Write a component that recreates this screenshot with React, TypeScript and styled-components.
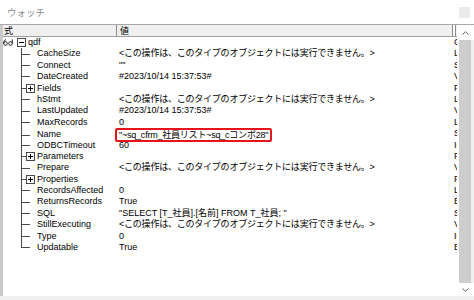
import React from 'react';
import styled, { createGlobalStyle } from 'styled-components';

const GlobalStyle = createGlobalStyle`
  html, body {
    margin: 0;
    padding: 0;
    background: #fff;
  }
  body {
    font-family: "Liberation Sans", "Noto Sans CJK JP", sans-serif;
    color: #000;
  }
`;

const ROW_H = 11.4;

const Window = styled.div`
  width: 474px;
  height: 300px;
  display: flex;
  flex-direction: column;
  background: #fff;
  overflow: hidden;
`;

const TitleBar = styled.div`
  height: 24px;
  flex: none;
  box-sizing: border-box;
  display: flex;
  align-items: flex-start;
  justify-content: space-between;
  padding: 7px 4px 0 7px;
`;

const Title = styled.span`
  font-family: "Noto Sans CJK JP", sans-serif;
  font-size: 9.5px;
  line-height: 11px;
  color: #8c8c8c;
`;

const CornerButton = styled.span`
  width: 11px;
  height: 11px;
  background: #ebebeb;
`;

const Body = styled.div`
  flex: 1;
  display: flex;
  min-height: 0;
  border-top: 1px solid #a8a8a8;
`;

const ListPane = styled.div`
  width: 457px;
  box-sizing: border-box;
  border-left: 3px solid #c9c9c9;
  display: flex;
  flex-direction: column;
  overflow: hidden;
`;

const HeaderRow = styled.div`
  height: 11px;
  flex: none;
  display: grid;
  grid-template-columns: 114px 336px 1fr;
  background: #f0f0f0;
  border-bottom: 1px solid #a0a0a0;
  font-family: "Noto Sans CJK JP", sans-serif;
  font-size: 9px;
  line-height: 11px;
`;

const HeaderCell = styled.div<{ $pad?: number; $tail?: boolean }>`
  box-sizing: border-box;
  height: 11px;
  padding-left: ${(p) => p.$pad ?? 0}px;
  border-right: ${(p) => (p.$tail ? 'none' : '1px solid #8a8a8a')};
  background: ${(p) =>
    p.$tail ? 'linear-gradient(to right, #fff 0 2px, #8a8a8a 2px 3px, #f0f0f0 3px)' : 'transparent'};
`;

const Row = styled.div`
  height: ${ROW_H}px;
  flex: none;
  display: grid;
  grid-template-columns: 114px 336px 1fr;
  font-size: 9px;
  line-height: ${ROW_H}px;
  white-space: nowrap;
`;

const TreeCell = styled.div<{ $indent: number }>`
  display: flex;
  align-items: center;
  padding-left: ${(p) => p.$indent}px;
`;

const Branch = styled.span<{ $len: number; $last?: boolean }>`
  width: ${(p) => p.$len}px;
  align-self: stretch;
  flex: none;
  background:
    linear-gradient(#4a4a4a, #4a4a4a) left top / 1px ${(p) => (p.$last ? '50%' : '100%')} no-repeat,
    linear-gradient(#4a4a4a, #4a4a4a) left center / 100% 1px no-repeat;
`;

const Label = styled.span<{ $gap: number }>`
  margin-left: ${(p) => p.$gap}px;
`;

const ValueCell = styled.div<{ $tight?: boolean }>`
  display: flex;
  align-items: center;
  padding-left: 2px;
  letter-spacing: ${(p) => (p.$tight ? '-0.22px' : 'normal')};
`;

const Highlight = styled.span`
  margin-left: -4px;
  padding: 0 2px;
  border: 2px solid #e8141c;
  border-radius: 2px;
  line-height: 10px;
  background: #fff;
`;

const TypeCell = styled.div`
  padding-left: 1px;
  overflow: hidden;
`;

const Scrollbar = styled.div`
  width: 15px;
  margin-left: 2px;
  display: flex;
  flex-direction: column;
  background: #f0f0f0;
`;

const ArrowBox = styled.div<{ $h: number }>`
  height: ${(p) => p.$h}px;
  flex: none;
  display: flex;
  align-items: center;
  justify-content: center;
  padding-right: 3px;
  background: #fff;
`;

const Thumb = styled.div`
  flex: 1;
  margin-right: 3px;
  background: #cdcdcd;
`;

const BottomStrip = styled.div`
  height: 4px;
  flex: none;
  background: #f0f0f0;
`;

const Glasses = () => (
  <svg width="10" height="7" viewBox="0 0 10 7" style={{ marginRight: 4, flex: 'none' }}>
    <g fill="none" stroke="#222" strokeWidth="1">
      <circle cx="2.5" cy="4.5" r="1.8" />
      <circle cx="7.5" cy="4.5" r="1.8" />
      <path d="M0.7 4.5C0.7 2.2 1.4 1 3 0.6" />
      <path d="M9.3 4.5V0.4" />
    </g>
  </svg>
);

const ExpandBox = ({ open }: { open?: boolean }) => (
  <svg width="9" height="9" viewBox="0 0 9 9" style={{ flex: 'none' }}>
    <rect x="0.5" y="0.5" width="8" height="8" fill="#fff" stroke="#4a4a4a" />
    <path d="M2 4.5h5" stroke="#000" />
    {!open && <path d="M4.5 2v5" stroke="#000" />}
  </svg>
);

const Chevron = ({ up }: { up?: boolean }) => (
  <svg width="7" height="4" viewBox="0 0 7 4">
    <path d={up ? 'M0.5 3.5L3.5 0.8L6.5 3.5' : 'M0.5 0.5L3.5 3.2L6.5 0.5'} fill="none" stroke="#606060" />
  </svg>
);

const NA = '<この操作は、このタイプのオブジェクトには実行できません。>';
const DATE = '#2023/10/14 15:37:53#';

type Item = {
  name: string;
  value?: string;
  type: string;
  expandable?: boolean;
  highlight?: boolean;
  tight?: boolean;
};

const items: Item[] = [
  { name: 'CacheSize', value: NA, type: 'Long', tight: true },
  { name: 'Connect', value: '""', type: 'String' },
  { name: 'DateCreated', value: DATE, type: 'Variant/Date' },
  { name: 'Fields', type: 'Fields/Fields', expandable: true },
  { name: 'hStmt', value: NA, type: 'Long', tight: true },
  { name: 'LastUpdated', value: DATE, type: 'Variant/Date' },
  { name: 'MaxRecords', value: '0', type: 'Long' },
  { name: 'Name', value: '"~sq_cfrm_社員リスト~sq_cコンボ28"', type: 'String', highlight: true, tight: true },
  { name: 'ODBCTimeout', value: '60', type: 'Integer' },
  { name: 'Parameters', type: 'Parameters/Parameters', expandable: true },
  { name: 'Prepare', value: NA, type: 'Variant', tight: true },
  { name: 'Properties', type: 'Properties/Properties', expandable: true },
  { name: 'RecordsAffected', value: '0', type: 'Long' },
  { name: 'ReturnsRecords', value: 'True', type: 'Boolean' },
  { name: 'SQL', value: '"SELECT [T_社員].[名前] FROM T_社員; "', type: 'String' },
  { name: 'StillExecuting', value: NA, type: 'Variant', tight: true },
  { name: 'Type', value: '0', type: 'Integer' },
  { name: 'Updatable', value: 'True', type: 'Boolean' },
];

const App = () => (
  <>
    <GlobalStyle />
    <Window>
      <TitleBar>
        <Title>ウォッチ</Title>
        <CornerButton />
      </TitleBar>
      <Body>
        <ListPane>
          <HeaderRow>
            <HeaderCell $pad={1}>式</HeaderCell>
            <HeaderCell $pad={3}>値</HeaderCell>
            <HeaderCell $tail />
          </HeaderRow>
          <Row>
            <TreeCell $indent={0}>
              <Glasses />
              <ExpandBox open />
              <Label $gap={2}>qdf</Label>
            </TreeCell>
            <ValueCell />
            <TypeCell>QueryDef/QueryDef</TypeCell>
          </Row>
          {items.map((item, index) => (
            <Row key={item.name}>
              <TreeCell $indent={18}>
                <Branch $len={item.expandable ? 5 : 9} $last={index === items.length - 1} />
                {item.expandable && <ExpandBox />}
                <Label $gap={item.expandable ? 2 : 7}>{item.name}</Label>
              </TreeCell>
              <ValueCell $tight={item.tight}>
                {item.highlight ? <Highlight>{item.value}</Highlight> : item.value}
              </ValueCell>
              <TypeCell>{item.type}</TypeCell>
            </Row>
          ))}
        </ListPane>
        <Scrollbar>
          <ArrowBox $h={15}>
            <Chevron up />
          </ArrowBox>
          <Thumb />
          <ArrowBox $h={13}>
            <Chevron />
          </ArrowBox>
        </Scrollbar>
      </Body>
      <BottomStrip />
    </Window>
  </>
);

export default App;
